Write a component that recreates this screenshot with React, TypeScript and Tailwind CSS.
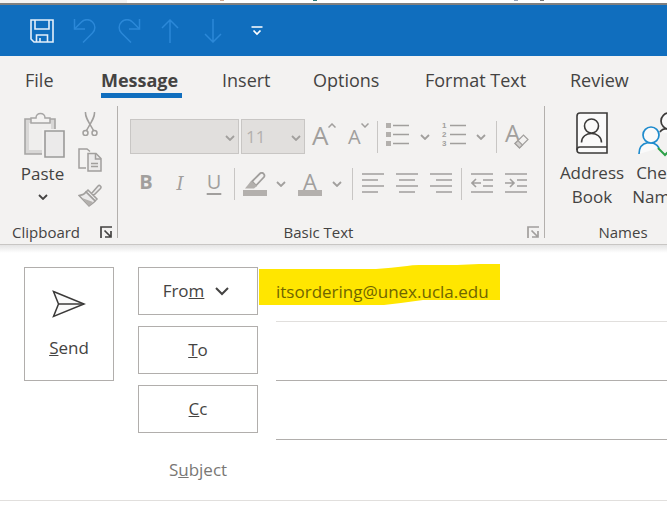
import React from "react";

type IconProps = { className?: string };

function Chevron({ className = "" }: IconProps) {
  return (
    <svg className={className} width="10" height="6" viewBox="0 0 10 6" fill="none" stroke="currentColor" strokeWidth="1.8">
      <path d="M1 1l4 4 4-4" />
    </svg>
  );
}

function SmallChevron({ className = "" }: IconProps) {
  return (
    <svg className={className} width="8" height="5" viewBox="0 0 8 5" fill="none" stroke="currentColor" strokeWidth="1.5">
      <path d="M.5.500L4 4 7.500.500" />
    </svg>
  );
}

function SaveIcon() {
  return (
    <svg width="24" height="24" viewBox="0 0 24 24" stroke="#e4effa" strokeWidth="1.6" fill="none">
      <path d="M1 1h22v22H4l-3-3z" />
      <path d="M5 1v9h14V1" />
      <path d="M6.500 23v-7h11v7M10 23v-4" />
    </svg>
  );
}

function UndoIcon({ className = "" }: IconProps) {
  return (
    <svg className={className} width="24" height="24" viewBox="0 0 24 24" stroke="#2b88d8" strokeWidth="1.5" fill="none">
      <path d="M1.500 0v10H12" />
      <path d="M1.500 10L8.500 3a7.600 7.600 0 0 1 11 0a7.600 7.600 0 0 1 0 11L10 23.500" />
    </svg>
  );
}

function ArrowIcon({ className = "" }: IconProps) {
  return (
    <svg className={className} width="18" height="24" viewBox="0 0 18 24" stroke="#2b88d8" strokeWidth="1.5" fill="none">
      <path d="M9 24V1M1 9l8-8 8 8" />
    </svg>
  );
}

function PasteIcon() {
  return (
    <svg width="42" height="46" viewBox="0 0 42 46" fill="none">
      <path d="M1 7h30v35H1z" fill="#d8d7d6" />
      <path d="M5 11h22v27H5z" fill="#efeeed" />
      <path d="M19 42H1V7h6M25 7h6v11" stroke="#a6a5a4" strokeWidth="1.600" />
      <path d="M7 11V6h5c0-6 9-6 9 0h5v5z" fill="#f3f2f1" stroke="#a6a5a4" strokeWidth="1.500" />
      <path d="M18 17h24v29H18z" fill="#f3f2f1" />
      <path d="M21 19h19v26H21z" fill="#ebeaea" stroke="#9b9a99" strokeWidth="1.600" />
    </svg>
  );
}

function CutIcon() {
  return (
    <svg width="24" height="24" viewBox="0 0 24 24" fill="none" stroke="#a19f9d" strokeWidth="1.500">
      <path d="M7.500 0C7 5 10 9 15.500 18.500M16.500 0C17 5 14 9 8.500 18.500" />
      <circle cx="7.500" cy="21" r="2.500" />
      <circle cx="16.500" cy="21" r="2.500" />
    </svg>
  );
}

function CopyIcon() {
  return (
    <svg width="24" height="24" viewBox="0 0 24 24" fill="none" stroke="#a19f9d" strokeWidth="1.500">
      <path d="M8 20H1V1h8l3 2.500" />
      <path d="M10 5.500h8l5 5V23H10z" fill="#ebeaea" />
      <path d="M17.500 5.500v5.500H23M13 15.500h7M13 18.500h7" />
    </svg>
  );
}

function PainterIcon() {
  return (
    <svg width="24" height="24" viewBox="0 0 24 24" fill="none" stroke="#a19f9d" strokeWidth="1.500">
      <path d="M10 6l9 9-2 2-9-9zM13.500 9.500L20 2c1.500-1.500 4 .5 2.500 2.500L15.500 11.500" fill="#ebeaea" />
      <path d="M8 8c-2 3-4 3-7 3.500L11 22c2-2 5-3 6-5z" fill="#ebeaea" />
      <path d="M4 14l11 4-4 4z" fill="#b3b0ad" stroke="none" />
    </svg>
  );
}

function LauncherIcon() {
  return (
    <svg width="12" height="12" viewBox="0 0 12 12" fill="none" stroke="currentColor" strokeWidth="1.700">
      <path d="M1 12V1h11M4.500 4.500L10.500 10.500M11 5v6H5" />
    </svg>
  );
}

function BulletsIcon() {
  return (
    <svg width="24" height="28" viewBox="0 0 24 28">
      <path d="M0 0h5v5H0zM0 9h5v5H0zM0 18h5v5H0z" fill="#b3b0ad" />
      <path d="M7 2.500h16M7 11.500h16M7 20.500h16" stroke="#a19f9d" strokeWidth="1.500" />
    </svg>
  );
}

function NumberingIcon() {
  return (
    <svg className="overflow-visible" width="24" height="28" viewBox="0 0 24 28">
      <g fill="#a19f9d" className="font-['Liberation_Sans',sans-serif] text-[8px] font-bold">
        <text x="0" y="5">1</text>
        <text x="0" y="14">2</text>
        <text x="0" y="23">3</text>
      </g>
      <path d="M8 2.500h16M8 11.500h16M8 20.500h16" stroke="#a19f9d" strokeWidth="1.500" />
    </svg>
  );
}

function EraserIcon() {
  return (
    <svg className="absolute right-0 bottom-0" width="15" height="15" viewBox="0 0 15 15" fill="none" stroke="#a19f9d" strokeWidth="1.200">
      <path d="M1 9.500L9.500 1 14 5.500 5.500 14z" fill="#f3f2f1" />
      <path d="M1 9.500L4 6.500 8.500 11 5.500 14z" fill="#d2d0ce" />
    </svg>
  );
}

function HighlighterIcon() {
  return (
    <svg width="24" height="24" viewBox="0 0 24 24" fill="none">
      <path d="M9 9.500L17 1.500c2.500-2 5.500 1 4 3.500L13 13.500z" stroke="#a19f9d" strokeWidth="1.800" />
      <path d="M8 9l6 5-3 2.500H2z" fill="#b3b0ad" />
      <path d="M0 18h24v6H0z" fill="#b3b0ad" />
    </svg>
  );
}

const lineArt: Record<string, string> = {
  left: "M0 1h22M0 7h16M0 13h22M0 19h16",
  center: "M0 1h22M3 7h16M0 13h22M3 19h16",
  right: "M0 1h22M6 7h16M0 13h22M6 19h16",
  outdent: "M0 1h22M12 7h10M12 13h10M0 19h22M1 10h9M5 6L1 10l4 4",
  indent: "M0 1h22M12 7h10M12 13h10M0 19h22M0 10h9M5 6l4 4-4 4",
};

function LinesButton({ kind, label }: { kind: string; label: string }) {
  return (
    <button aria-label={label} className="w-[22px]">
      <svg width="22" height="22" viewBox="0 0 22 22" fill="none" stroke="#a19f9d" strokeWidth="1.600">
        <path d={lineArt[kind]} />
      </svg>
    </button>
  );
}

function AddressBookIcon() {
  return (
    <svg width="32" height="42" viewBox="0 0 32 42" fill="#fafafa" stroke="#3b3a39" strokeWidth="1.600">
      <path d="M4 1h27v40H4c-2 0-3-1-3-3V4c0-2 1-3 3-3z" />
      <path d="M31 35H4c-2 0-3 1-3 3" fill="none" />
      <path d="M5.500 30.500c0-12 20-12 20 0" />
      <circle cx="15.500" cy="14" r="7" />
    </svg>
  );
}

function CheckNamesIcon() {
  return (
    <svg className="overflow-visible" width="44" height="42" viewBox="0 0 44 42" fill="#fafafa" strokeWidth="1.700">
      <g stroke="#3b3a39">
        <path d="M22 20c3-5 16-5 19 3" />
        <circle cx="31" cy="9" r="8" />
      </g>
      <g stroke="#1e8bcd">
        <path d="M1 42c0-14 16-14 20-6" />
        <circle cx="13" cy="23" r="8" />
      </g>
      <path d="M20 36l7 7 14-14" fill="none" stroke="#2da048" strokeWidth="2" />
    </svg>
  );
}

function SendIcon() {
  return (
    <svg width="34" height="28" viewBox="0 0 34 28" fill="#fafafa" stroke="#3b3a39" strokeWidth="1.500">
      <path d="M1.500 1.500L32 14 1.500 26.500 6.500 14z" />
      <path d="M6.500 14H32" />
    </svg>
  );
}

function Rule() {
  return <span className="h-8 w-px bg-[#c8c6c4]" />;
}

const tabs = [
  { label: "File", width: "w-[76px]" },
  { label: "Message", width: "w-[121px]", active: true },
  { label: "Insert", width: "w-[91px]" },
  { label: "Options", width: "w-28" },
  { label: "Format Text", width: "w-[145px]" },
  { label: "Review", width: "w-24" },
];

const addressButton =
  "flex h-12 w-[120px] shrink-0 items-center justify-center border border-[#b1aeac] bg-white text-[17px]";

export default function App() {
  return (
    <div className="overflow-hidden bg-white font-['Open_Sans','Noto_Sans',sans-serif] text-[#444342]">
      <div className="flex h-[5px] border-b-2 border-[#7f7f7f]">
        <span className="w-[127px] bg-[#f3f3f3]" />
        <span className="ml-[93px] h-px w-1 bg-[#d0a890]" />
        <span className="ml-[89px] h-px w-1 bg-[#2b7a78]" />
        <span className="ml-[197px] h-px w-1 bg-[#9aa4b8]" />
        <span className="ml-[22px] h-px w-1 bg-[#777777]" />
      </div>

      <header className="flex h-[51px] items-center bg-[#106ebe] pt-px pl-[30px]">
        <button aria-label="Save"><SaveIcon /></button>
        <button aria-label="Undo" className="ml-[19px]"><UndoIcon /></button>
        <button aria-label="Redo" className="ml-5"><UndoIcon className="-scale-x-100" /></button>
        <button aria-label="Previous item" className="ml-5"><ArrowIcon /></button>
        <button aria-label="Next item" className="ml-[25px]"><ArrowIcon className="rotate-180" /></button>
        <button aria-label="Customize toolbar" className="ml-[29px]">
          <svg width="12" height="12" viewBox="0 0 12 12" fill="none" stroke="#fff" strokeWidth="1.700">
            <path d="M.5 2h11M2.500 5.500L6 9l3.500-3.500" />
          </svg>
        </button>
      </header>

      <div className="border-b border-[#c8c6c4] bg-[#f3f2f1]">
        <nav className="flex h-[50px] pt-[10px] pl-[25px]">
          {tabs.map((tab) => (
            <div key={tab.label} className={`shrink-0 ${tab.width}`}>
              <button
                className={
                  tab.active
                    ? "block h-8 border-b-5 border-[#106ebe] pr-1 text-lg leading-6 font-bold whitespace-nowrap"
                    : "block h-8 border-b-5 border-transparent text-lg leading-6 whitespace-nowrap"
                }
              >
                {tab.label}
              </button>
            </div>
          ))}
        </nav>

        <div className="flex pb-[6px]">
          <section className="flex h-[132px] w-[118px] shrink-0 flex-col justify-between border-r border-[#b3b0ad]">
            <div className="flex pt-[6px] pl-[21px]">
              <button className="flex w-[43px] flex-col items-center">
                <span className="ml-1"><PasteIcon /></span>
                <span className="mt-1 text-[17px] leading-6">Paste</span>
                <Chevron className="mt-2" />
              </button>
              <div className="ml-[14px] flex flex-col gap-3">
                <button aria-label="Cut"><CutIcon /></button>
                <button aria-label="Copy"><CopyIcon /></button>
                <button aria-label="Format painter"><PainterIcon /></button>
              </div>
            </div>
            <div className="flex items-center justify-between pr-[5px] pl-3 text-[15px] leading-3">
              Clipboard
              <button aria-label="Clipboard options"><LauncherIcon /></button>
            </div>
          </section>

          <section className="flex h-[132px] w-[427px] shrink-0 flex-col border-r border-[#b3b0ad] text-[#a19f9d]">
            <div className="mt-[13px] ml-3 flex h-[35px] items-center">
              <div className="relative">
                <select aria-label="Font" className="block h-[35px] w-[109px] appearance-none border border-[#c8c6c4] bg-[#e1dfdd]">
                  <option></option>
                </select>
                <Chevron className="pointer-events-none absolute top-4 right-1" />
              </div>
              <div className="relative ml-0.5">
                <select aria-label="Font size" className="block h-[35px] w-16 appearance-none border border-[#c8c6c4] bg-[#e1dfdd] pl-1 text-[17px] text-[#b3b0ad]">
                  <option>11</option>
                </select>
                <Chevron className="pointer-events-none absolute top-4 right-1" />
              </div>
              <button aria-label="Grow font" className="ml-[7px] flex h-7 w-6 items-start text-[26px] leading-6">
                A<SmallChevron className="shrink-0 rotate-180" />
              </button>
              <button aria-label="Shrink font" className="ml-3 flex h-7 w-[22px] items-start text-xl leading-7">
                A<SmallChevron className="shrink-0" />
              </button>
              <span className="ml-[7px] flex"><Rule /></span>
              <button aria-label="Bullets" className="ml-2"><BulletsIcon /></button>
              <Chevron className="ml-[10px]" />
              <button aria-label="Numbering" className="ml-3"><NumberingIcon /></button>
              <Chevron className="ml-[10px]" />
              <span className="ml-[10px] flex"><Rule /></span>
              <button aria-label="Clear formatting" className="relative ml-2 flex h-6 w-6 items-start text-2xl leading-4">
                A<EraserIcon />
              </button>
            </div>

            <div className="mt-[13px] ml-3 flex h-[34px] items-center">
              <button aria-label="Bold" className="h-7 w-8 text-xl leading-6 font-bold"><span className="block h-7">B</span></button>
              <button aria-label="Italic" className="w-9 font-['DejaVu_Serif','Liberation_Serif',serif] text-lg leading-6 italic">I</button>
              <button aria-label="Underline" className="h-7 w-8 text-xl leading-6 underline underline-offset-4"><span className="block h-7">U</span></button>
              <span className="ml-1 flex"><Rule /></span>
              <button aria-label="Highlight" className="ml-2"><HighlighterIcon /></button>
              <Chevron className="ml-[9px]" />
              <button aria-label="Font colour" className="ml-3 flex h-6 w-6 items-center justify-center border-b-6 border-[#b3b0ad] text-[22px] leading-4">A</button>
              <Chevron className="ml-[10px]" />
              <span className="mr-[9px] ml-[10px] flex"><Rule /></span>
              <div className="flex gap-3">
                <LinesButton kind="left" label="Align left" />
                <LinesButton kind="center" label="Centre" />
                <LinesButton kind="right" label="Align right" />
              </div>
              <span className="mx-[9px] flex"><Rule /></span>
              <div className="flex gap-3">
                <LinesButton kind="outdent" label="Decrease indent" />
                <LinesButton kind="indent" label="Increase indent" />
              </div>
            </div>

            <div className="mt-auto flex items-center pr-[5px] text-[15px] leading-3">
              <span className="flex-1 pr-2 text-center text-[#444342]">Basic Text</span>
              <button aria-label="Basic text options"><LauncherIcon /></button>
            </div>
          </section>

          <section className="flex h-[132px] min-w-0 flex-1 flex-col">
            <div className="flex gap-[9px] pt-[6px] pl-[15px] text-[17px] leading-6">
              <button className="flex w-16 shrink-0 flex-col items-center">
                <AddressBookIcon />
                <span className="mt-[7px]">Address<br />Book</span>
              </button>
              <button className="flex w-[54px] shrink-0 flex-col items-center">
                <CheckNamesIcon />
                <span className="mt-[7px]">Check<br />Names</span>
              </button>
            </div>
            <div className="mt-auto w-[156px] text-center text-[15px] leading-3">Names</div>
          </section>
        </div>
      </div>

      <div className="h-2 bg-linear-to-b from-[#e4e4e4] to-white" />

      <main className="border-b border-[#e1dfdd]">
        <div className="flex pt-[10px] pl-6">
          <button className="mt-1 flex h-[114px] w-[90px] shrink-0 flex-col items-center border border-[#b1aeac] bg-white pt-[22px] text-[17px] leading-6">
            <SendIcon />
            <span className="mt-[18px]"><u>S</u>end</span>
          </button>

          <div className="ml-6 min-w-0 flex-1">
            <div className="flex h-[59px]">
              <button className={`${addressButton} mt-1 gap-[11px] pr-1`}>
                <label htmlFor="from">Fro<u>m</u></label>
                <svg width="14" height="9" viewBox="0 0 14 9" fill="none" stroke="currentColor" strokeWidth="2">
                  <path d="M1 1l6 6 6-6" />
                </svg>
              </button>
              <div className="relative ml-[18px] min-w-0 flex-1 border-b border-[#e1dfdd]">
                <svg className="absolute top-px -left-[17px]" width="241" height="41" viewBox="0 0 241 41" fill="#ffe600">
                  <path d="M0 5H117Q132 4 148 2Q153 1 160 1H198L220 0H241V36H164Q143 39 125 41H0z" />
                </svg>
                <input
                  id="from"
                  defaultValue="itsordering@unex.ucla.edu"
                  className="relative mt-[14px] block h-7 w-full bg-transparent text-[17px] text-[#6f6500] outline-none"
                />
              </div>
            </div>
            <div className="flex h-[59px]">
              <button className={`${addressButton} mt-1`}><label htmlFor="to"><u>T</u>o</label></button>
              <input id="to" className="ml-[18px] min-w-0 flex-1 border-b border-[#b1aeac] text-[17px] outline-none" />
            </div>
            <div className="flex h-[59px]">
              <button className={`${addressButton} mt-1`}><label htmlFor="cc"><u>C</u>c</label></button>
              <input id="cc" className="ml-[18px] min-w-0 flex-1 border-b border-[#b1aeac] text-[17px] outline-none" />
            </div>
            <div className="flex h-[60px] items-center">
              <label htmlFor="subject" className="w-[120px] shrink-0 text-center text-[17px] text-[#797775]">
                S<u>u</u>bject
              </label>
              <input id="subject" className="ml-[18px] min-w-0 flex-1 text-[17px] outline-none" />
            </div>
          </div>
        </div>
      </main>
    </div>
  );
}
